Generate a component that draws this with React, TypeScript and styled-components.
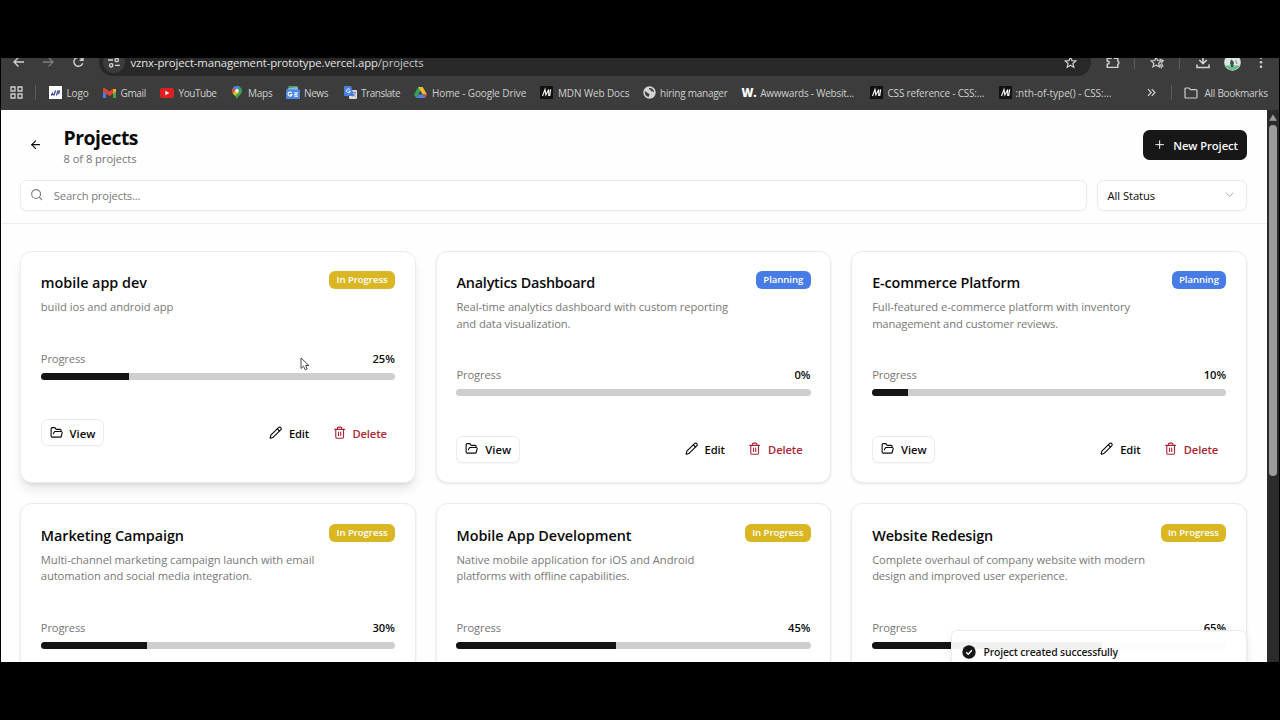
import React from "react";
import styled, { createGlobalStyle, css } from "styled-components";
import {
  ArrowLeft, ChevronDown, FolderOpen, Pencil, Plus, Search, Trash2,
} from "lucide-react";

const Global = createGlobalStyle`
  *, *::before, *::after { box-sizing: border-box; }
  body { margin: 0; background: #000; font-family: "Open Sans", "Noto Sans", sans-serif; }
`;

const Frame = styled.div`
  width: 1280px;
  height: 720px;
  padding: 58px 1px;
  background: #000;
  overflow: hidden;
`;
const Window = styled.div`
  position: relative;
  display: flex;
  flex-direction: column;
  height: 604px;
  overflow: hidden;
  background: #3c3c3c;
`;

/* Text whose tracking is tuned per use */
const Text = styled.span<{ $track?: number }>`
  white-space: pre;
  letter-spacing: ${(p) => p.$track ?? 0}px;
`;

/* ---------- browser chrome ---------- */
const Toolbar = styled.div`
  flex: none;
  display: flex;
  align-items: flex-end;
  height: 18px;
  overflow: hidden;
`;
const ToolbarRow = styled.div`
  flex: none;
  display: flex;
  align-items: center;
  width: 1278px;
  height: 28px;
  color: #d2d2d2;
`;
const NavIcons = styled.div`
  display: flex;
  gap: 17px;
  width: 98px;
  padding-left: 11px;
  svg { display: block; }
`;
const Omnibox = styled.div`
  display: flex;
  align-items: center;
  width: 992px;
  height: 28px;
  padding: 0 14px 0 4px;
  border-radius: 14px;
  background: #282828;
`;
const SiteInfo = styled.div`
  display: grid;
  place-items: center;
  width: 22px;
  height: 22px;
  margin-right: 5.5px;
  border-radius: 50%;
  background: #3c3c3c;
`;
const Url = styled(Text)`
  flex: 1;
  padding-top: 1px;
  font-size: 11.3px;
  line-height: 16px;
  color: #e3e3e3;
  span { color: #c4c4c4; }
`;
const Actions = styled.div`
  flex: 1;
  display: flex;
  align-items: center;
  padding-left: 14.5px;
`;
const Slot = styled.div<{ $w: number }>`
  flex: none;
  display: flex;
  align-items: center;
  width: ${(p) => p.$w}px;
`;
const Rule = styled.i<{ $h?: number }>`
  display: block;
  width: 1px;
  height: ${(p) => p.$h ?? 14}px;
  background: #5c5c5c;
`;
const Bookmarks = styled.div`
  flex: none;
  display: flex;
  align-items: center;
  height: 34px;
  padding: 0 0 1px 9px;
  color: #cfcfcf;
`;
const Bookmark = styled.div<{ $w: number; $gap: number }>`
  flex: none;
  display: flex;
  align-items: center;
  gap: ${(p) => p.$gap}px;
  width: ${(p) => p.$w}px;
  font-size: 10px;
  line-height: 14px;
  svg { flex: none; display: block; }
`;

/* ---------- page ---------- */
const Viewport = styled.div`
  flex: 1;
  display: flex;
  min-height: 0;
`;
const Page = styled.main`
  position: relative;
  width: 1266px;
  height: 552px;
  overflow: hidden;
  background: #fefefe;
  color: #0a0a0a;
`;
const Header = styled.header`
  height: 114px;
  padding: 15px 20px 0 19px;
  border-bottom: 1px solid #ededed;
`;
const HeaderTop = styled.div`
  display: flex;
  align-items: center;
  height: 41px;
`;
const BackButton = styled.button`
  display: grid;
  place-items: center;
  width: 30px;
  height: 30px;
  margin: -1px 13.5px 0 0.5px;
  padding: 0;
  border: 0;
  background: none;
  color: #0a0a0a;
`;
const TitleBlock = styled.div`
  flex: 1;
  display: flex;
  flex-direction: column;
`;
const Title = styled.h1`
  margin: 1px 0 0 -0.5px;
  font-size: 19.4px;
  line-height: 24px;
  font-weight: 700;
  letter-spacing: -0.49px;
`;
const Subtitle = styled(Text)`
  margin: 1px 0 0 -0.5px;
  font-size: 11.2px;
  line-height: 15px;
  color: #737373;
`;
const NewButton = styled.button`
  display: flex;
  align-items: center;
  gap: 7px;
  width: 104px;
  height: 30px;
  margin-top: -1px;
  padding: 1px 0 0 10px;
  border: 0;
  border-radius: 6.5px;
  background: #171717;
  color: #fafafa;
  font: 600 11.2px/16px "Open Sans", sans-serif;
  white-space: nowrap;
  svg { margin-top: -2px; }
`;
const Filters = styled.div`
  display: flex;
  gap: 10px;
  margin-top: 14px;
`;
const field = css`
  display: flex;
  align-items: center;
  height: 30.5px;
  border: 1px solid #ebebeb;
  border-radius: 6.5px;
  background: #fff;
  box-shadow: 0 1px 2px rgba(0, 0, 0, 0.04);
  font-size: 11.2px;
  line-height: 16px;
  span { margin-top: 1.5px; }
`;
const SearchField = styled.div`
  ${field};
  flex: 1;
  gap: 10.5px;
  padding-left: 9px;
  color: #7a7a7a;
  svg { margin-top: -1px; }
`;
const StatusSelect = styled.div`
  ${field};
  justify-content: space-between;
  width: 150px;
  padding: 0 9.5px;
  svg { color: #a8a8a8; margin-top: -1px; }
`;
const Grid = styled.div`
  display: grid;
  grid-template-columns: repeat(3, 1fr);
  grid-auto-rows: 232.8px;
  gap: 20px;
  padding: 26.5px 20px 0 19px;
`;
const Card = styled.article<{ $hover?: boolean }>`
  display: flex;
  flex-direction: column;
  padding: 19.6px 19.8px;
  border: 1px solid #ececec;
  border-radius: 11.6px;
  background: #fff;
  box-shadow: ${(p) =>
    p.$hover
      ? "0 8px 12px -2px rgba(0,0,0,.10), 0 3px 5px -3px rgba(0,0,0,.12)"
      : "0 1px 2.5px rgba(0,0,0,.10)"};
`;
const CardHead = styled.div`
  display: flex;
  justify-content: space-between;
  align-items: flex-start;
  height: 23.4px;
`;
const CardTitle = styled(Text)`
  font-size: 14.4px;
  line-height: 23.4px;
  font-weight: 600;
`;
const Badge = styled.div<{ $tone: "yellow" | "blue" }>`
  display: grid;
  place-items: center;
  width: ${(p) => (p.$tone === "blue" ? 54.5 : 65.5)}px;
  height: 18.4px;
  border-radius: 6px;
  background: ${(p) => (p.$tone === "blue" ? "#477be6" : "#dab722")};
  color: #fff;
  font-size: 9.6px;
  line-height: 14px;
  font-weight: 600;
`;
const Description = styled.div`
  display: flex;
  flex-direction: column;
  margin-top: 4.4px;
  font-size: 11.2px;
  line-height: 16.65px;
  color: #787878;
`;
const ProgressRow = styled.div`
  display: flex;
  justify-content: space-between;
  margin-top: 35px;
  font-size: 11.2px;
  line-height: 16.6px;
`;
const ProgressLabel = styled(Text)` color: #787878; `;
const ProgressValue = styled(Text)` font-weight: 600; `;
const Track = styled.div`
  flex: none;
  height: 6.7px;
  margin-top: 5.7px;
  border-radius: 4px;
  background: #cecece;
  overflow: hidden;
`;
const Fill = styled.div`
  height: 100%;
  background: #141414;
`;
const CardActions = styled.div`
  display: flex;
  align-items: center;
  margin-top: 39.6px;
`;
const ActionButton = styled.button<{ $outline?: boolean; $danger?: boolean }>`
  display: flex;
  align-items: center;
  gap: 6.5px;
  height: 27px;
  margin: 0 ${(p) => (p.$outline ? "auto" : "0")} 0 0;
  padding: 2px 7.5px 0 ${(p) => (p.$outline ? "8px" : p.$danger ? "15.5px" : "8px")};
  border: 1px solid ${(p) => (p.$outline ? "#ebebeb" : "transparent")};
  border-radius: 6.5px;
  background: none;
  box-shadow: ${(p) => (p.$outline ? "0 1px 1.5px rgba(0,0,0,.04)" : "none")};
  color: ${(p) => (p.$danger ? "#a92533" : "#0a0a0a")};
  font: 600 11.2px/16px "Open Sans", sans-serif;
  svg { margin-top: -2.5px; }
  ${(p) => !p.$outline && css`padding-right: ${p.$danger ? 7 : 6}px;`}
`;

/* ---------- overlays ---------- */
const Toast = styled.div`
  position: absolute;
  left: 949.5px;
  top: 519.5px;
  display: flex;
  align-items: center;
  gap: 7.5px;
  width: 296.5px;
  height: 45px;
  padding-left: 10.5px;
  border: 1px solid #ececec;
  border-radius: 6.5px;
  background: rgba(255, 255, 255, 0.94);
  box-shadow: 0 3px 10px rgba(0, 0, 0, 0.08);
  font-size: 10.4px;
  line-height: 16px;
  font-weight: 600;
  color: #171717;
  svg { margin-top: -1px; }
`;
const Pointer = styled.svg`
  position: absolute;
  left: 298.5px;
  top: 247px;
`;
const Scrollbar = styled.div`
  display: flex;
  flex-direction: column;
  align-items: center;
  width: 12px;
  padding-top: 4px;
  background: #2b2b2b;
`;
const ScrollThumb = styled.div`
  width: 8px;
  height: 351px;
  margin-top: 4px;
  border-radius: 4px;
  background: #9c9c9c;
`;

/* ---------- favicons ---------- */
const LogoFav = () => (
  <svg width="13" height="13" viewBox="0 0 13 13">
    <rect width="13" height="13" fill="#fff" />
    <path d="M2.3 9.5 3.6 6.5M4.8 9.5 6.6 4.500M7.400 9.5 9 4.500M9.500 8 10.6 4.500M2.5 8.700h2.500M8.500 5h2.300" stroke="#3a3a9c" strokeWidth="1.2" fill="none" />
  </svg>
);
const GmailFav = () => (
  <svg width="13" height="10" viewBox="0 0 13 10">
    <path d="M0 1.2V10h3V4z" fill="#4b7fe0" />
    <path d="M13 1.2V10h-3V4z" fill="#41a556" />
    <path d="M10 .9 13 1v2.5l-3 2.2z" fill="#f0b92a" />
    <path d="M0 3.5V1.3C0 0 1.4-.3 2.4.5L6.5 3.6 10.3.6V5.4L6.5 8.2 3 5.6z" fill="#dc4437" />
  </svg>
);
const YouTubeFav = () => (
  <svg width="14" height="10" viewBox="0 0 14 10">
    <rect width="14" height="10" rx="2.6" fill="#e02020" />
    <path d="M5.4 2.8v4.4L9.2 5z" fill="#fff" />
  </svg>
);
const MapsFav = () => (
  <svg width="10" height="13" viewBox="0 0 10 13">
    <path d="M5 0a5 5 0 0 1 5 5c0 3-3.5 4.300-5 8C3.800 9.500 0 8 0 5a5 5 0 0 1 5-5z" fill="#35a652" />
    <path d="M5 0C3.300 0 2 .7 1 1.900L5 5 7.800.900C7 .3 6 0 5 0z" fill="#4a83e8" />
    <path d="M1 1.900C-.2 3.500-.2 5.500.8 7.200L4.800 4.900z" fill="#dd4b3a" />
    <path d="M.8 7.200 5.500 2.500 7 6.500 3 9.800z" fill="#edb92e" />
    <circle cx="5" cy="4.800" r="1.700" fill="#fff" />
  </svg>
);
const NewsFav = () => (
  <svg width="14" height="13" viewBox="0 0 14 13">
    <path d="M2.500 0h9v4h-9z" fill="#4aa564" />
    <path d="m1.500 2.500 10-1.500 1 4h-11z" fill="#8fb7ee" />
    <rect y="3.500" width="14" height="9.500" rx="1" fill="#4d86e4" />
    <path d="M5.800 7A2 2 0 1 0 6 8.600H4.300M8.300 6.800h3.600M8.300 8.500h2.900M8.300 10.200h3.600" stroke="#fff" strokeWidth="1.200" fill="none" />
  </svg>
);
const TranslateFav = () => (
  <svg width="13" height="13" viewBox="0 0 13 13">
    <rect x="5" y="4" width="8" height="9" rx="1" fill="#dcdcdc" />
    <path d="M8 6.500h4M10 5.500v1M11.300 6.500c-.4 2-1.500 3-2.800 4M8.800 7.800c.6 1.200 1.500 2 2.700 2.700" stroke="#6b7c9c" strokeWidth=".8" fill="none" />
    <path d="M1 0h6l3 10H1a1 1 0 0 1-1-1V1a1 1 0 0 1 1-1z" fill="#4b80e2" />
    <path d="M6 3.700A1.900 1.900 0 1 0 6.300 5.200H4.600" stroke="#fff" strokeWidth="1" fill="none" />
  </svg>
);
const DriveFav = () => (
  <svg width="13" height="11" viewBox="0 0 13 11">
    <path d="M4.300 0h4.400L4.300 7.600 2.200 11 0 7.400z" fill="#35a457" />
    <path d="M4.300 0h4.400L13 7.400H8.600z" fill="#efbd33" />
    <path d="M4.400 7.400H13L10.800 11H2.200z" fill="#4a82e6" />
    <path d="M8.600 7.400H13L10.800 11z" fill="#dc4a3c" />
  </svg>
);
const MdnFav = () => (
  <svg width="13" height="13" viewBox="0 0 13 13">
    <rect width="13" height="13" fill="#111" />
    <path d="M2.500 10 5 3.500l.9 5.500 2.800-5.500V10M10.700 3.300 9.700 10" stroke="#f2f2f2" strokeWidth="1.150" fill="none" />
  </svg>
);
const GlobeFav = () => (
  <svg width="13" height="13" viewBox="0 0 13 13">
    <circle cx="6.500" cy="6.500" r="6.200" fill="#d5d5d5" />
    <path d="M1.800 5.500c1.500 0 2 .6 2.700 1.500.6.800 1.800.3 2 1.300.2.900-.8 1.200-.8 2.700-2.300-.4-4.200-2.700-3.900-5.500zM6 2c-.3 1.200.3 1.600 1.300 1.800 1 .3.500 1.700 1.600 1.800 1 .1 1.300 0 2.300.7C11 3.800 8.900 1.700 6 2z" fill="#3c3c3c" />
  </svg>
);
const WLogo = styled.b`
  font: 800 11.5px/14px "Open Sans", sans-serif;
  color: #fff;
  letter-spacing: -0.3px;
`;

const bookmarks: { icon: React.ReactNode; name: string; w: number; gap: number; track: number }[] = [
  { icon: <LogoFav />, name: "Logo", w: 54, gap: 5, track: -0.15 },
  { icon: <GmailFav />, name: "Gmail", w: 57.5, gap: 5, track: -0.33 },
  { icon: <YouTubeFav />, name: "YouTube", w: 71.5, gap: 4.5, track: -0.44 },
  { icon: <MapsFav />, name: "Maps", w: 54.5, gap: 6.5, track: -0.22 },
  { icon: <NewsFav />, name: "News", w: 57.5, gap: 4, track: -0.4 },
  { icon: <TranslateFav />, name: "Translate", w: 70.5, gap: 4.5, track: -0.47 },
  { icon: <DriveFav />, name: "Home - Google Drive", w: 126, gap: 5, track: -0.13 },
  { icon: <MdnFav />, name: "MDN Web Docs", w: 102.5, gap: 5, track: -0.12 },
  { icon: <GlobeFav />, name: "hiring manager", w: 99, gap: 4.5, track: -0.25 },
  { icon: <WLogo>W.</WLogo>, name: "Awwwards - Websit...", w: 128, gap: 4, track: -0.23 },
  { icon: <MdnFav />, name: "CSS reference - CSS:...", w: 129, gap: 5, track: -0.19 },
  { icon: <MdnFav />, name: ":nth-of-type() - CSS:...", w: 148.5, gap: 4, track: -0.03 },
];

interface Project {
  name: string; track: number; lines: [string, number][];
  status: "In Progress" | "Planning"; progress: number; hover?: boolean;
}
const projects: Project[] = [
  { name: "mobile app dev", track: -0.03, lines: [["build ios and android app", -0.037]], status: "In Progress", progress: 25, hover: true },
  { name: "Analytics Dashboard", track: -0.21, lines: [["Real-time analytics dashboard with custom reporting", -0.073], ["and data visualization.", -0.099]], status: "Planning", progress: 0 },
  { name: "E-commerce Platform", track: -0.13, lines: [["Full-featured e-commerce platform with inventory", -0.051], ["management and customer reviews.", -0.128]], status: "Planning", progress: 10 },
  { name: "Marketing Campaign", track: -0.08, lines: [["Multi-channel marketing campaign launch with email", -0.042], ["automation and social media integration.", -0.082]], status: "In Progress", progress: 30 },
  { name: "Mobile App Development", track: -0.03, lines: [["Native mobile application for iOS and Android", -0.013], ["platforms with offline capabilities.", -0.085]], status: "In Progress", progress: 45 },
  { name: "Website Redesign", track: -0.09, lines: [["Complete overhaul of company website with modern", -0.071], ["design and improved user experience.", -0.104]], status: "In Progress", progress: 65 },
];

const ProjectCard = ({ p }: { p: Project }) => (
  <Card $hover={p.hover}>
    <CardHead>
      <CardTitle $track={p.track}>{p.name}</CardTitle>
      <Badge $tone={p.status === "Planning" ? "blue" : "yellow"}>
        <Text $track={-0.06}>{p.status}</Text>
      </Badge>
    </CardHead>
    <Description>
      {p.lines.map(([line, track]) => <Text key={line} $track={track}>{line}</Text>)}
    </Description>
    <ProgressRow>
      <ProgressLabel $track={-0.14}>Progress</ProgressLabel>
      <ProgressValue>{p.progress}%</ProgressValue>
    </ProgressRow>
    <Track><Fill style={{ width: `${p.progress}%` }} /></Track>
    <CardActions>
      <ActionButton $outline>
        <FolderOpen size={13.3} strokeWidth={2} /><Text $track={0.05}>View</Text>
      </ActionButton>
      <ActionButton>
        <Pencil size={13.3} strokeWidth={2} /><Text $track={-0.15}>Edit</Text>
      </ActionButton>
      <ActionButton $danger>
        <Trash2 size={13.3} strokeWidth={2} /><Text $track={-0.1}>Delete</Text>
      </ActionButton>
    </CardActions>
  </Card>
);

export default function App() {
  return (
    <Frame>
      <Global />
      <Window>
        <Toolbar>
          <ToolbarRow>
            <NavIcons>
              <svg width="13" height="12" viewBox="0 0 13 12" fill="none" stroke="currentColor" strokeWidth="1.400"><path d="M12 6H2M6.500 1.500 2 6l4.500 4.500" /></svg>
              <svg width="13" height="12" viewBox="0 0 13 12" fill="none" stroke="#7c7c7c" strokeWidth="1.300"><path d="M1 6h10M6.500 1.500 11 6l-4.500 4.500" /></svg>
              <svg width="13" height="12" viewBox="0 0 13 12" fill="none" stroke="currentColor" strokeWidth="1.400"><path d="M10.700 7.200A4.500 4.500 0 1 1 9.700 2.700l1 1M11 .8v3.400H7.600" /></svg>
            </NavIcons>
            <Omnibox>
              <SiteInfo>
                <svg width="12" height="11" viewBox="0 0 12 11" fill="none" stroke="#d6d6d6" strokeWidth="1.300"><path d="M0 3h5M7 8.300h5" /><circle cx="8.700" cy="3" r="1.700" /><circle cx="3.200" cy="8.300" r="1.700" /></svg>
              </SiteInfo>
              <Url $track={-0.088}>vznx-project-management-prototype.vercel.app<span>/projects</span></Url>
              <svg width="13" height="13" viewBox="0 0 13 13" fill="none" stroke="#d2d2d2" strokeWidth="1.200"><path d="m6.500 1.200 1.500 3.500 3.900.3-3 2.500.9 3.700-3.300-2-3.300 2 .9-3.700-3-2.500 3.900-.3z" /></svg>
            </Omnibox>
            <Actions>
              <Slot $w={28.5}>
                <svg width="14" height="14" viewBox="0 0 14 14" fill="none" stroke="currentColor" strokeWidth="1.400"><path d="M1.200 3.200H5a1.700 1.700 0 0 1 3.400 0h3.400v3a1.700 1.700 0 0 1 0 3.200v3H1.200V9.200c2.600 0 2.600-3.200 0-3.200z" /></svg>
              </Slot>
              <Slot $w={16}><Rule /></Slot>
              <Slot $w={29}>
                <svg width="15" height="13" viewBox="0 0 15 13" fill="none" stroke="currentColor" strokeWidth="1.200"><path d="m6.200 1.200 1.500 3.300 3.700.4-2.700 2.400.8 3.600-3.300-1.800-3.200 1.800.8-3.600L1 4.900l3.700-.4z" /><path d="m10.500 8.300 1 4M11.500 7.200l1.700 3.800M9.500 3l3.800 1.700-2 2" /></svg>
              </Slot>
              <Slot $w={17}><Rule /></Slot>
              <Slot $w={28}>
                <svg width="14" height="14" viewBox="0 0 14 14" fill="none" stroke="currentColor" strokeWidth="1.600"><path d="M7 0v8.500M3.300 5 7 8.700 10.700 5M1 9.500v3h12v-3" /></svg>
              </Slot>
              <Slot $w={35}>
                <svg width="17" height="17" viewBox="0 0 17 17"><circle cx="8.500" cy="8.500" r="8.300" fill="#dfe3e2" /><path d="M1.200 11.500h14.600a8.200 8.200 0 0 1-14.600 0z" fill="#62bd8f" /><path d="M7 5.500c1.500 0 1.800 2 3 3l-1 4.500H7.300L6 9z" fill="#3d5148" /><path d="M11 6.500c1.500.5 2 2 1.700 3.500" stroke="#7c9188" fill="none" /></svg>
              </Slot>
              <svg width="4" height="14" viewBox="0 0 4 14" fill="#d2d2d2"><circle cx="2" cy="2.700" r="1.300" /><circle cx="2" cy="7.200" r="1.300" /><circle cx="2" cy="11.700" r="1.300" /></svg>
            </Actions>
          </ToolbarRow>
        </Toolbar>
        <Bookmarks>
          <Slot $w={25}>
            <svg width="13" height="13" viewBox="0 0 13 13" fill="none" stroke="#cfcfcf" strokeWidth="1.300"><path d="M1 1h4v4H1zM8 1h4v4H8zM1 8h4v4H1zM8 8h4v4H8z" /></svg>
          </Slot>
          <Slot $w={13.5}><Rule $h={15} /></Slot>
          {bookmarks.map((b, i) => (
            <Bookmark key={i} $w={b.w} $gap={b.gap}>{b.icon}<Text $track={b.track}>{b.name}</Text></Bookmark>
          ))}
          <Slot $w={23.5}>
            <svg width="9" height="9" viewBox="0 0 9 9" fill="none" stroke="#d2d2d2" strokeWidth="1.200"><path d="m1 1.200 3.200 3.300L1 7.800M4.800 1.200 8 4.500 4.800 7.800" /></svg>
          </Slot>
          <Slot $w={13.5}><Rule $h={15} /></Slot>
          <Bookmark $w={84} $gap={6.5}>
            <svg width="14" height="12" viewBox="0 0 14 12" fill="none" stroke="#cfcfcf" strokeWidth="1.200"><path d="M1 10V2q0-1 1-1h3l1.500 1.600H12q1 0 1 1V10q0 1-1 1H2q-1 0-1-1z" /></svg>
            <Text $track={-0.27}>All Bookmarks</Text>
          </Bookmark>
        </Bookmarks>
        <Viewport>
          <Page>
            <Header>
              <HeaderTop>
                <BackButton><ArrowLeft size={13.3} strokeWidth={2} /></BackButton>
                <TitleBlock>
                  <Title>Projects</Title>
                  <Subtitle $track={-0.06}>8 of 8 projects</Subtitle>
                </TitleBlock>
                <NewButton><Plus size={13.3} strokeWidth={1.8} /><Text $track={-0.07}>New Project</Text></NewButton>
              </HeaderTop>
              <Filters>
                <SearchField><Search size={13.3} strokeWidth={2} /><Text $track={-0.14}>Search projects...</Text></SearchField>
                <StatusSelect><Text $track={-0.06}>All Status</Text><ChevronDown size={13.3} strokeWidth={1.8} /></StatusSelect>
              </Filters>
            </Header>
            <Grid>{projects.map((p) => <ProjectCard key={p.name} p={p} />)}</Grid>
            <Toast>
              <svg width="14" height="14" viewBox="0 0 14 14"><circle cx="7" cy="7" r="6.700" fill="#171717" /><path d="m4.200 7.200 2 2 3.700-4" stroke="#fff" strokeWidth="1.400" fill="none" /></svg>
              <Text $track={-0.153}>Project created successfully</Text>
            </Toast>
            <Pointer width="10" height="14" viewBox="0 0 10 14"><path d="M1 1v10.500l2.500-2.300 1.700 3.600 2-.9L5.600 8.500H9z" fill="#fff" stroke="#333" strokeWidth=".9" /></Pointer>
          </Page>
          <Scrollbar>
            <svg width="8" height="7" viewBox="0 0 8 7"><path d="M4 .8 7.500 6.500h-7z" fill="#9c9c9c" stroke="#9c9c9c" strokeLinejoin="round" strokeWidth=".6" /></svg>
            <ScrollThumb />
          </Scrollbar>
        </Viewport>
      </Window>
    </Frame>
  );
}
